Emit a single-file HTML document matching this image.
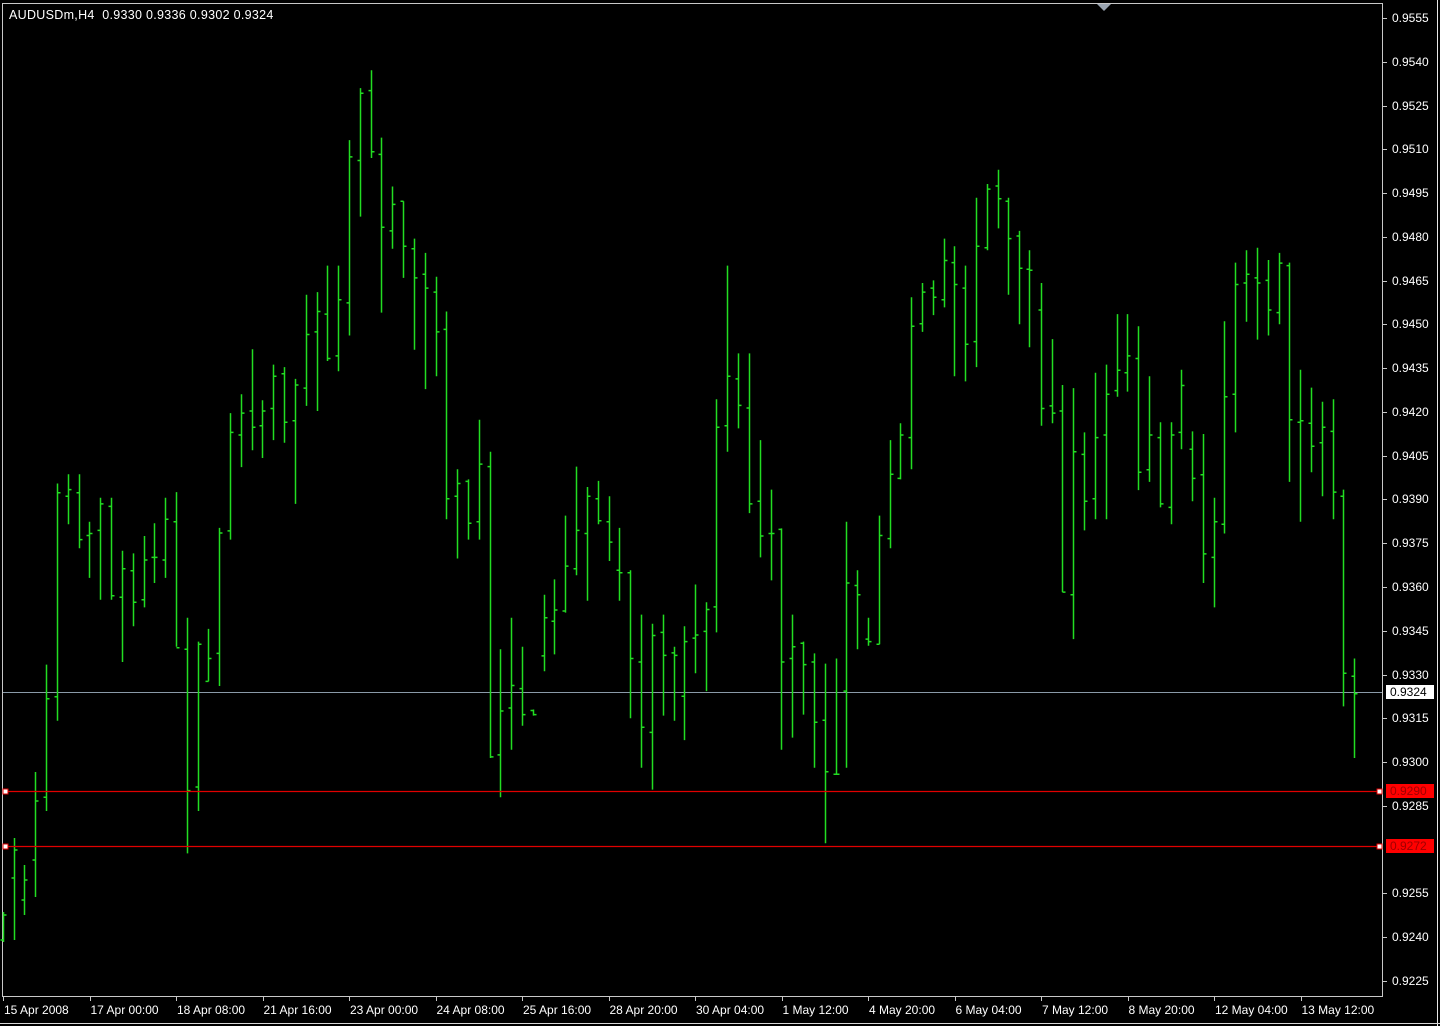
<!DOCTYPE html>
<html><head><meta charset="utf-8">
<style>
html,body{margin:0;padding:0;background:#000;}
body{width:1440px;height:1026px;overflow:hidden;position:relative;font-family:"Liberation Sans",sans-serif;}
svg{position:absolute;left:0;top:0;}
</style></head>
<body>
<svg id="s" width="1440" height="1026" xmlns="http://www.w3.org/2000/svg" font-family="Liberation Sans, sans-serif">
<rect x="0" y="0" width="1440" height="1026" fill="#000"/>
<line x1="1437.5" y1="0" x2="1437.5" y2="1026" stroke="#e8e8e8" stroke-width="1"/>
<line x1="0" y1="1023.5" x2="1440" y2="1023.5" stroke="#d8d8d8" stroke-width="1"/>
<rect x="2.5" y="3.5" width="1380" height="993" fill="none" stroke="#c8c8c8" stroke-width="1"/>
<polygon points="1097,4 1111,4 1104,11" fill="#9aa4b0"/>
<text x="9" y="19" fill="#fff" font-size="12.5" letter-spacing="0.3" xml:space="preserve" style="white-space:pre">AUDUSDm,H4  0.9330 0.9336 0.9302 0.9324</text>
<line x1="3" y1="692.5" x2="1382" y2="692.5" stroke="#8a9aa8" stroke-width="1"/>
<g id="bars" stroke="#22dd22" stroke-width="1.5" fill="none"></g>
<line x1="5" y1="791.5" x2="1380" y2="791.5" stroke="#e00000" stroke-width="1.3"/>
<line x1="5" y1="846.5" x2="1380" y2="846.5" stroke="#e00000" stroke-width="1.3"/>
<rect x="3" y="789" width="5" height="5" fill="#fff" stroke="#e00000"/>
<rect x="3" y="844" width="5" height="5" fill="#fff" stroke="#e00000"/>
<rect x="1377" y="789" width="5" height="5" fill="#fff" stroke="#e00000"/>
<rect x="1377" y="844" width="5" height="5" fill="#fff" stroke="#e00000"/>
<g id="axis" fill="#fff" font-size="12"></g>
<rect x="1386" y="685" width="48" height="14" fill="#fff"/>
<text x="1390" y="696" fill="#000" font-size="12">0.9324</text>
<rect x="1386" y="784" width="48" height="14" fill="#ff0000"/>
<text x="1390" y="795" fill="#a00000" font-size="12">0.9290</text>
<rect x="1386" y="839" width="48" height="14" fill="#ff0000"/>
<text x="1390" y="850" fill="#a00000" font-size="12">0.9272</text>
</svg>
<script>
(function(){
var NS="http://www.w3.org/2000/svg";
var g=document.getElementById('bars');
var bars=[];
bars.push([3,912,942,940,915],[14,838,940,878,850],[24,865,915,900,880],[35,772,897,860,801]);
function add(list,xoff){list.forEach(function(b){bars.push([b[0]/3+xoff,60+b[1]/1.96,60+b[2]/1.96,60+b[3]/1.96,60+b[4]/1.96]);});}
add([[137,1185,1472,1445,1252],[170,830,1295,1248,848],[203,812,910,855,842],[236,812,957,848,940],[268,905,1015,932,928],[300,858,1058,922,870],[333,858,1058,875,1050],[366,962,1180,1053,997],[398,967,1110,1001,1063],[431,933,1073,1058,980],[463,908,1025,975,975],[495,858,1015,980,900],[528,847,1150,905,1152],[560,1093,1555,1155,1432],[593,1140,1472,1425,1145],[625,1115,1218,1218,1173],[658,917,1227,1163,927],[690,692,940,923,730],[722,655,798,735,692],[755,567,765,688,720],[787,667,780,717,688],[820,597,745,683,620],[852,602,750,615,710],[885,625,870,707,637],[917,460,678,643,538],[950,455,688,533,493],[982,403,590,498,585],[1015,403,610,580,470],[1047,157,540,476,190]],0);
add([[59,55,307,197,65],[92,20,192,60,180],[124,152,495,185,328],[157,248,370,335,283],[189,277,427,277,365],[222,350,568,370,427],[254,378,645,420,447],[287,425,620,455,533],[319,493,900,528,860],[351,802,977,855,830],[384,822,940,826,908],[416,705,940,905,792],[449,768,1368,797,1366],[481,1155,1445,1362,1276],[514,1093,1352,1270,1226],[546,1150,1305,1232,1283],[579,1273,1285,1275,1283],[611,1048,1198,1168,1093],[643,1018,1165,1100,1078],[676,893,1083,1080,992],[708,797,1010,997,922],[741,837,1060,928,855],[773,825,910,860,903],[806,855,982,905,945],[838,917,1060,1000,1005],[871,1000,1290,1005,1173],[903,1087,1387,1180,1308],[936,1105,1430,1318,1128],[968,1087,1285,1122,1167],[1001,1150,1295,1162,1167],[1033,1110,1333,1247,1140]],340);
add([[44,1028,1202,1133,1127],[77,1063,1237,1120,1077],[109,665,1122,1072,720],[142,403,768,717,620],[174,575,722,625,677],[207,575,888,682,870],[239,745,975,865,933],[272,842,1020,928,928],[304,918,1352,920,1180],[337,1087,1328,1173,1150],[369,1140,1283,1143,1185],[402,1163,1387,1180,1298],[434,1183,1535,1294,1395],[467,1173,1400,1400,1400],[499,905,1387,1237,1025],[531,1000,1155,1030,1048],[564,1093,1148,1135,1140],[596,893,1145,1145,932],[629,745,957,938,812],[661,712,822,820,735],[693,465,802,740,522],[726,437,533,517,455],[758,432,500,447,465],[791,350,485,470,393],[823,365,620,397,440],[856,403,630,447,557],[888,270,602,552,365],[920,243,373,368,253],[953,215,330,247,272],[985,270,460,277,350],[1018,335,518,345,408],[1048,373,563,410,412]],680);
add([[62,437,717,490,683],[95,547,712,678,692],[127,637,1043,688,1043],[160,643,1135,1048,768],[192,730,922,773,865],[225,613,900,860,740],[257,597,900,735,655],[290,498,660,648,608],[322,498,650,613,580],[354,522,843,585,808],[387,620,827,803,735],[419,710,877,740,870],[452,710,910,877,735],[484,607,763,730,638],[516,728,865,763,820],[549,733,1025,813,968],[581,858,1073,975,905],[613,512,928,910,660],[646,397,730,655,440],[678,373,513,437,420],[711,368,548,427,437],[743,392,540,432,490],[776,378,518,495,398],[808,397,827,403,705],[840,607,905,710,707],[873,642,808,712,757],[905,670,855,750,720],[938,665,900,728,847],[970,842,1267,855,1202],[1003,1173,1368,1208,1242]],1020);
var d="";
bars.forEach(function(b){var x=Math.round(b[0])+0.5;
d+="M"+x+" "+b[1].toFixed(1)+"V"+b[2].toFixed(1)+"M"+(x-3)+" "+b[3].toFixed(1)+"H"+x+"M"+x+" "+b[4].toFixed(1)+"H"+(x+3);});
var p=document.createElementNS(NS,'path');p.setAttribute('d',d);g.appendChild(p);
var ax=document.getElementById('axis');
function T(x,y,s){var t=document.createElementNS(NS,'text');t.setAttribute('x',x);t.setAttribute('y',y);t.textContent=s;ax.appendChild(t);}
function L(x1,y1,x2,y2){var l=document.createElementNS(NS,'line');l.setAttribute('x1',x1);l.setAttribute('y1',y1);l.setAttribute('x2',x2);l.setAttribute('y2',y2);l.setAttribute('stroke','#c8c8c8');ax.appendChild(l);}
for(var i=0;i<=22;i++){var p2=9555-15*i;var y=18+i*43.77;if(p2===9270)continue;
 L(1383,Math.round(y)+0.5,1387,Math.round(y)+0.5);T(1392,Math.round(y)+4,"0."+p2);}
var dates=["15 Apr 2008","17 Apr 00:00","18 Apr 08:00","21 Apr 16:00","23 Apr 00:00","24 Apr 08:00","25 Apr 16:00","28 Apr 20:00","30 Apr 04:00","1 May 12:00","4 May 20:00","6 May 04:00","7 May 12:00","8 May 20:00","12 May 04:00","13 May 12:00"];
dates.forEach(function(s,k){var x=3+k*86.5;L(Math.round(x)+0.5,997,Math.round(x)+0.5,1001);T(x+1,1014,s);});
})();
</script>
</body></html>
